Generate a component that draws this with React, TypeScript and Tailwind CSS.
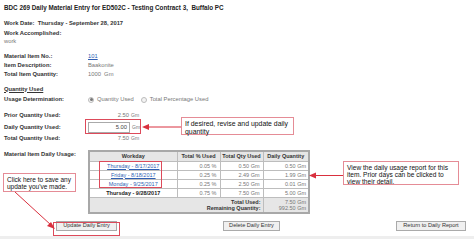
import React from 'react';

const rows = [
  { day: 'Thursday - 8/17/2017', pct: '0.05 %', total: '0.50 Gm', daily: '0.50 Gm', link: true },
  { day: 'Friday - 8/18/2017', pct: '0.25 %', total: '2.49 Gm', daily: '1.99 Gm', link: true },
  { day: 'Monday - 9/25/2017', pct: '0.25 %', total: '2.50 Gm', daily: '0.01 Gm', link: true },
  { day: 'Thursday - 9/28/2017', pct: '0.75 %', total: '7.50 Gm', daily: '5.00 Gm', link: false },
];

function Field({ label, children, h = 9 }: { label: string; children?: React.ReactNode; h?: number }) {
  return (
    <div className="flex items-center" style={{ height: h }}>
      <div className="w-[84px] shrink-0 font-bold text-[#333]">{label}</div>
      <div className="flex items-center text-[#777]">{children}</div>
    </div>
  );
}

function Radio({ on }: { on?: boolean }) {
  return (
    <span className="inline-flex w-[6px] h-[6px] rounded-full border border-[#bbb] bg-[#f4f4f4] items-center justify-center mr-[3px]">
      {on && <span className="w-[3px] h-[3px] rounded-full bg-[#777]" />}
    </span>
  );
}

const cell = 'p-0 border border-[#bdbdbd] whitespace-nowrap';

export default function App() {
  return (
    <div className="relative w-[474px] h-[239px] overflow-hidden bg-white font-['Liberation_Sans',Arial,sans-serif] text-[5.8px] leading-none text-[#222]">
      <div className="pl-[4px] pt-[4px]">
        <div className="h-[9px] flex items-center font-bold text-[6.3px] text-[#222] whitespace-nowrap">
          BDC 269 Daily Material Entry for ED502C - Testing Contract 3,&nbsp; Buffalo PC
        </div>
        <div className="h-[9px] mt-[6px] flex items-center font-bold text-[#333]">
          Work Date:&nbsp; Thursday - September 28, 2017
        </div>
        <div className="h-[9px] mt-[1px] flex items-center font-bold text-[#333]">Work Accomplished:</div>
        <div className="h-[7px] flex items-center text-[#777]">work</div>

        <div className="mt-[7px]">
          <Field label="Material Item No.:">
            <span className="text-[#2f5fb3] underline">101</span>
          </Field>
          <Field label="Item Description:">Baakonite</Field>
          <Field label="Total Item Quantity:">1000&nbsp; Gm</Field>
        </div>

        <div className="h-[9px] mt-[6px] flex items-center font-bold text-[#333] underline">Quantity Used</div>
        <Field label="Usage Determination:" h={11}>
          <Radio on />
          <span className="mr-[7px]">Quantity Used</span>
          <Radio />
          <span>Total Percentage Used</span>
        </Field>

        <div className="mt-[6px]">
          <Field label="Prior Quantity Used:" h={10}>
            <span className="w-[41px] text-right">2.50</span>
            <span className="ml-[2px] text-[5px]">Gm</span>
          </Field>
          <Field label="Daily Quantity Used:" h={13}>
            <span className="w-[42px] h-[11px] border border-[#aaa] bg-white flex items-center justify-end pr-[2px] text-[#444]">5.00</span>
            <span className="ml-[2px] text-[5px]">Gm</span>
          </Field>
          <Field label="Total Quantity Used:" h={10}>
            <span className="w-[41px] text-right">7.50</span>
            <span className="ml-[2px] text-[5px]">Gm</span>
          </Field>
        </div>

        <div className="flex mt-[6px]">
          <div className="w-[84px] shrink-0 font-bold text-[#333] pt-[2px]">Material Item Daily Usage:</div>
          <table className="table-fixed border-collapse border-2 border-[#a8a8a8] bg-[#e6e6e6] text-[5.5px] leading-[6px] w-[220px]">
            <colgroup>
              <col className="w-[88px]" />
              <col className="w-[43px]" />
              <col className="w-[43px]" />
              <col className="w-[46px]" />
            </colgroup>
            <thead>
              <tr className="h-[10px]">
                <th className={`${cell} bg-[#e6e6e6] font-bold text-[#333]`}>Workday</th>
                <th className={`${cell} bg-[#e6e6e6] font-bold text-[#333]`}>Total % Used</th>
                <th className={`${cell} bg-[#e6e6e6] font-bold text-[#333]`}>Total Qty Used</th>
                <th className={`${cell} bg-[#e6e6e6] font-bold text-[#333]`}>Daily Quantity</th>
              </tr>
            </thead>
            <tbody>
              {rows.map((r) => (
                <tr key={r.day} className="h-[9px]">
                  <td className={`${cell} bg-white text-center`}>
                    {r.link ? (
                      <span className="text-[#2f5fb3] underline">{r.day}</span>
                    ) : (
                      <span className="font-bold text-[#222]">{r.day}</span>
                    )}
                  </td>
                  <td className={`${cell} bg-white text-right pr-[3px] text-[#777]`}>{r.pct}</td>
                  <td className={`${cell} bg-white text-right pr-[3px] text-[#777]`}>{r.total}</td>
                  <td className={`${cell} bg-white text-right pr-[2px] text-[#777]`}>{r.daily}</td>
                </tr>
              ))}
              <tr className="h-[16px]">
                <td colSpan={3} className={`${cell} bg-[#e6e6e6] text-right pr-[2px] font-bold text-[#333] leading-[6px]`}>
                  Total Used:
                  <br />
                  Remaining Quantity:
                </td>
                <td className={`${cell} bg-[#e6e6e6] text-right pr-[2px] text-[#777] leading-[6px]`}>
                  7.50 Gm
                  <br />
                  992.50 Gm
                </td>
              </tr>
            </tbody>
          </table>
        </div>

        <div className="flex items-center mt-[6px] h-[12px]">
          <button className="ml-[52px] w-[61px] h-[10px] bg-[#f0f0f0] border border-[#aaa] text-[5.6px] text-[#333] whitespace-nowrap">Update Daily Entry</button>
          <button className="ml-[106px] w-[57px] h-[10px] bg-[#f0f0f0] border border-[#aaa] text-[5.6px] text-[#333] whitespace-nowrap">Delete Daily Entry</button>
          <button className="ml-auto mr-[8px] w-[70px] h-[10px] bg-[#f0f0f0] border border-[#aaa] text-[5.6px] text-[#333] whitespace-nowrap">Return to Daily Report</button>
        </div>
      </div>

      <div className="absolute left-0 right-0 bottom-0 h-[3px] bg-[#eeeeee]" />

      {/* annotations */}
      <div className="absolute left-[85px] top-[119px] w-[56px] h-[15px] border border-[#dd4a5a]" />
      <div className="absolute left-[99px] top-[161px] w-[63px] h-[27px] border border-[#dd4a5a]" />
      <div className="absolute left-[53px] top-[222px] w-[67px] h-[14px] border border-[#dd4a5a]" />

      <div className="absolute left-[181px] top-[117px] w-[113px] h-[18px] border border-[#e58c96] bg-white px-[3px] pt-[2px] text-[6.9px] leading-[7.5px] text-[#111] whitespace-nowrap">
        If desired, revise and update daily
        <br />
        quantity
      </div>
      <div className="absolute left-[343px] top-[161px] w-[116px] h-[24px] border border-[#e58c96] bg-white px-[3px] pt-[1.5px] text-[6.6px] leading-[7.2px] text-[#111] whitespace-nowrap">
        View the daily usage report for this
        <br />
        item. Prior days can be clicked to
        <br />
        view their detail.
      </div>
      <div className="absolute left-[3px] top-[173px] w-[73px] h-[19px] border border-[#e58c96] bg-white px-[3px] pt-[1.5px] text-[6.5px] leading-[7.5px] text-[#111] whitespace-nowrap">
        Click here to save any
        <br />
        update you've made.
      </div>

      <svg className="absolute inset-0 pointer-events-none" width="474" height="239" viewBox="0 0 474 239">
        <g stroke="#d9303e" strokeWidth="1" fill="#d9303e">
          <line x1="181" y1="127" x2="146" y2="127" />
          <polygon points="142,127 149,124 149,130" stroke="none" />
          <line x1="343" y1="175.5" x2="313" y2="175.5" />
          <polygon points="309,175.5 316,172.5 316,178.5" stroke="none" />
          <line x1="15" y1="192" x2="51" y2="225" />
          <polygon points="55,229 47,226 51,222" stroke="none" />
        </g>
      </svg>
    </div>
  );
}
